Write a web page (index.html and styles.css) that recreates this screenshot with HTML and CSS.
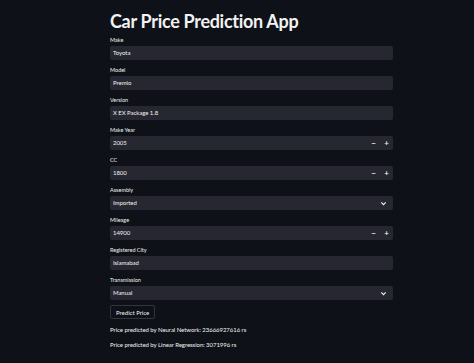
FILE: index.html
```html
<!DOCTYPE html>
<html lang="en">
<head>
  <meta charset="UTF-8" />
  <meta name="viewport" content="width=device-width, initial-scale=1" />
  <title>Car Price Prediction App</title>
  <link rel="stylesheet" href="styles.css">
</head>
<body>
  <main class="app">
    <h1>Car Price Prediction App</h1>

    <div class="field">
      <label>Make</label>
      <div class="box">Toyota</div>
    </div>
    <div class="field">
      <label>Model</label>
      <div class="box">Premio</div>
    </div>
    <div class="field">
      <label>Version</label>
      <div class="box">X EX Package 1.8</div>
    </div>
    <div class="field">
      <label>Make Year</label>
      <div class="box number">
        <span class="value">2005</span>
        <span class="step">&minus;</span>
        <span class="step">+</span>
      </div>
    </div>
    <div class="field">
      <label>CC</label>
      <div class="box number">
        <span class="value">1800</span>
        <span class="step">&minus;</span>
        <span class="step">+</span>
      </div>
    </div>
    <div class="field">
      <label>Assembly</label>
      <div class="box select">
        <span class="value">Imported</span>
        <svg class="chevron" viewBox="0 0 10 10"><path d="M2.5 3.8 5 6.3 7.5 3.8" /></svg>
      </div>
    </div>
    <div class="field">
      <label>Mileage</label>
      <div class="box number">
        <span class="value">14900</span>
        <span class="step">&minus;</span>
        <span class="step">+</span>
      </div>
    </div>
    <div class="field">
      <label>Registered City</label>
      <div class="box">Islamabad</div>
    </div>
    <div class="field">
      <label>Transmission</label>
      <div class="box select">
        <span class="value">Manual</span>
        <svg class="chevron" viewBox="0 0 10 10"><path d="M2.5 3.8 5 6.3 7.5 3.8" /></svg>
      </div>
    </div>

    <button class="btn">Predict Price</button>

    <p class="result">Price predicted by Neural Network: 23666927616 rs</p>
    <p class="result">Price predicted by Linear Regression: 3071996 rs</p>
  </main>
</body>
</html>
```

FILE: styles.css
```css
:root {
  --fundo: #0e1117;
  --campo: #262730;
  --texto: #f2f2f2;
  --borda: #33343c;
}

* {
  box-sizing: border-box;
  margin: 0;
  padding: 0;
}

body {
  font-family: Lato, "Open Sans", sans-serif;
  background: var(--fundo);
  color: var(--texto);
  height: 363px;
  overflow: hidden;
}

.app {
  width: 283px;
  margin-left: 110px;
  padding-top: 9px;
}

h1 {
  font-size: 18px;
  line-height: 24px;
  font-weight: 700;
  letter-spacing: -0.3px;
  margin-bottom: 2px;
}

.field {
  display: flex;
  flex-direction: column;
  gap: 1px;
  margin-bottom: 5px;
}

label {
  display: block;
  font-size: 5.5px;
  line-height: 10px;
}

.box {
  height: 14px;
  background: var(--campo);
  border-radius: 2px;
  padding: 0 3px;
  font-size: 6px;
  letter-spacing: -0.05px;
  line-height: 14px;
  display: flex;
  align-items: center;
}

.value {
  flex-grow: 1;
}

.box.number {
  padding-right: 0;
}

.number .step {
  width: 13px;
  text-align: center;
  font-size: 8px;
  font-weight: 700;
}

.chevron {
  width: 9px;
  height: 9px;
  margin-right: 2px;
  fill: none;
  stroke: var(--texto);
  stroke-width: 1.3;
}

.btn {
  display: block;
  margin-top: 1px;
  height: 14px;
  padding: 0 5px;
  background: var(--fundo);
  color: var(--texto);
  border: 1px solid var(--borda);
  border-radius: 2px;
  font-family: inherit;
  font-size: 6px;
}

.result {
  font-size: 6px;
  letter-spacing: -0.05px;
  line-height: 10px;
  margin-top: 6px;
}

.result + .result {
  margin-top: 5px;
}
```
